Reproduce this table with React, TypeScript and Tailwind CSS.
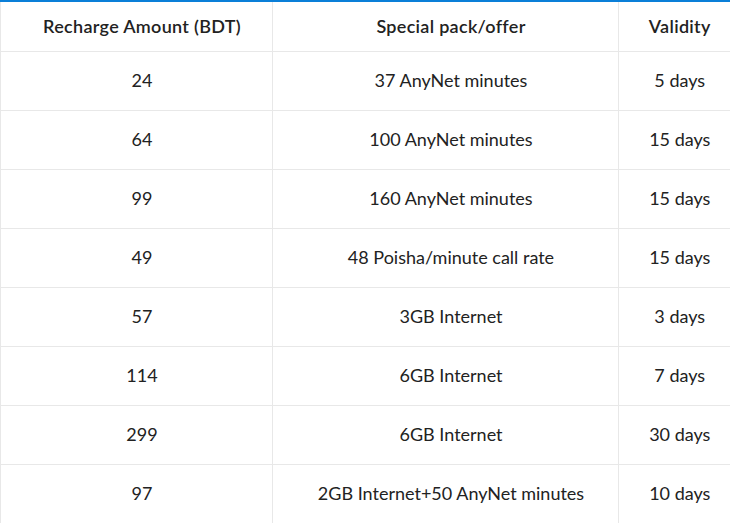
const ROWS = [
  ['24', '37 AnyNet minutes', '5 days'],
  ['64', '100 AnyNet minutes', '15 days'],
  ['99', '160 AnyNet minutes', '15 days'],
  ['49', '48 Poisha/minute call rate', '15 days'],
  ['57', '3GB Internet', '3 days'],
  ['114', '6GB Internet', '7 days'],
  ['299', '6GB Internet', '30 days'],
  ['97', '2GB Internet+50 AnyNet minutes', '10 days'],
]

export default function App() {
  return (
    <div className="w-[735px] h-[528px] overflow-hidden bg-white font-['Lato',sans-serif] text-[#222]">
      <table className="w-[729px] table-fixed border-collapse border-t-2 border-t-[#0a7fd8]">
        <colgroup>
          <col className="w-[272px]" />
          <col className="w-[346px]" />
          <col className="w-[111px]" />
        </colgroup>
        <thead>
          <tr className="h-[50px]">
            <th className="border-l border-b border-[#e8e8e8] text-[18px] tracking-[0.3px] font-semibold text-center pl-[11px]">Recharge Amount (BDT)</th>
            <th className="border-l border-b border-[#e8e8e8] text-[18px] tracking-[0.3px] font-semibold text-center pl-[11px]">Special pack/offer</th>
            <th className="border-l border-b border-[#e8e8e8] text-[18px] tracking-[0.3px] font-semibold text-center pl-[11px]">Validity</th>
          </tr>
        </thead>
        <tbody>
          {ROWS.map((r, i) => (
            <tr key={i} className="h-[59px]">
              {r.map((c, j) => (
                <td
                  key={j}
                  className={`border-l border-[#e8e8e8] text-[18px] text-center pl-[11px] ${i < ROWS.length - 1 ? 'border-b' : ''}`}
                >
                  {c}
                </td>
              ))}
            </tr>
          ))}
        </tbody>
      </table>
    </div>
  )
}
